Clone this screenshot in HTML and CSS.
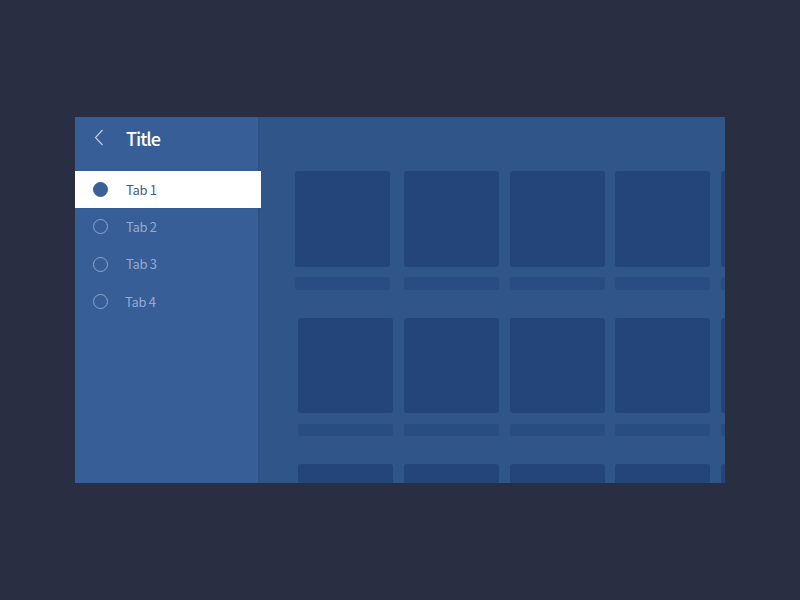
FILE: index.html
```html
<!DOCTYPE html>
<html>
<head>
<meta charset="utf-8">
<link rel="stylesheet" href="styles.css">
</head>
<body>
<div class="frame">
  <aside class="sidebar">
    <div class="header">
      <svg class="back" width="10" height="17" viewBox="0 0 10 17"><path d="M8.5 1 L1.5 8.5 L8.5 16" fill="none" stroke="#c3d1ea" stroke-width="1.1"/></svg>
      <span class="title">Title</span>
    </div>
    <ul class="tabs">
      <li class="tab active"><span class="dot"></span><span class="label">Tab 1</span></li>
      <li class="tab"><span class="dot"></span><span class="label">Tab 2</span></li>
      <li class="tab"><span class="dot"></span><span class="label">Tab 3</span></li>
      <li class="tab"><span class="dot"></span><span class="label shift">Tab 4</span></li>
    </ul>
  </aside>
  <main class="main">
    <div class="row first">
      <div class="item"><div class="card"></div><div class="bar"></div></div>
      <div class="item"><div class="card"></div><div class="bar"></div></div>
      <div class="item"><div class="card"></div><div class="bar"></div></div>
      <div class="item"><div class="card"></div><div class="bar"></div></div>
      <div class="item"><div class="card"></div><div class="bar"></div></div>
    </div>
    <div class="row">
      <div class="item"><div class="card"></div><div class="bar"></div></div>
      <div class="item"><div class="card"></div><div class="bar"></div></div>
      <div class="item"><div class="card"></div><div class="bar"></div></div>
      <div class="item"><div class="card"></div><div class="bar"></div></div>
      <div class="item"><div class="card"></div><div class="bar"></div></div>
    </div>
    <div class="row">
      <div class="item"><div class="card"></div><div class="bar"></div></div>
      <div class="item"><div class="card"></div><div class="bar"></div></div>
      <div class="item"><div class="card"></div><div class="bar"></div></div>
      <div class="item"><div class="card"></div><div class="bar"></div></div>
      <div class="item"><div class="card"></div><div class="bar"></div></div>
    </div>
  </main>
</div>
</body>
</html>
```
FILE: styles.css
```css
html, body {
  margin: 0;
  padding: 0;
  height: 100%;
}
body {
  background: #2a2e42;
  display: flex;
  align-items: center;
  justify-content: center;
  font-family: "Noto Sans CJK KR", "Noto Sans", sans-serif;
}
.frame {
  width: 650px;
  height: 366px;
  display: flex;
  overflow: hidden;
}
.sidebar {
  width: 183px;
  flex: none;
  background: #375e97;
  position: relative;
  z-index: 1;
}
.header {
  height: 54px;
  display: flex;
  align-items: center;
  padding-left: 19px;
  box-sizing: border-box;
  padding-bottom: 13px;
}
.back {
  display: block;
  margin-right: 22px;
}
.title {
  color: #ffffff;
  font-size: 18px;
  font-weight: 500;
  letter-spacing: -1px;
}
.tabs {
  list-style: none;
  margin: 0;
  padding: 0;
}
.tab {
  height: 37.33px;
  display: flex;
  align-items: center;
  padding-left: 18px;
  box-sizing: border-box;
}
.tab.active {
  background: #ffffff;
  margin-right: -3px;
  height: 37px;
  margin-bottom: 0.3px;
  box-shadow: 0 0 1px rgba(0,0,0,0.15);
}
.dot {
  width: 15px;
  height: 15px;
  border-radius: 50%;
  border: 1px solid #8da5cc;
  box-sizing: border-box;
  margin-right: 18px;
  flex: none;
}
.active .dot {
  background: #3a5f99;
  border-color: #3a5f99;
}
.label {
  font-size: 13px;
  color: #94abd1;
  letter-spacing: -0.3px;
  margin-top: -1px;
}
.active .label {
  color: #3d5d92;
}
.label.shift {
  margin-left: -1px;
}
.main {
  flex: 1;
  background: #2f5589;
  padding-top: 54px;
  padding-left: 40px;
  box-shadow: inset 2px 0 2px -1px rgba(0,0,0,0.08);
}
.row {
  display: flex;
  gap: 10.75px;
  margin-bottom: 28px;
}
.row.first {
  margin-left: -3px;
}
.row.first .item:first-child {
  margin-right: 3px;
}
.item {
  width: 95px;
  flex: none;
}
.card {
  height: 95px;
  background: #23457a;
  border-radius: 3px;
}
.first .card {
  height: 96px;
}
.bar {
  margin-top: 11px;
  height: 12px;
  background: #294c82;
  border-radius: 3px;
}
.first .bar {
  margin-top: 10px;
  height: 13px;
}
```
